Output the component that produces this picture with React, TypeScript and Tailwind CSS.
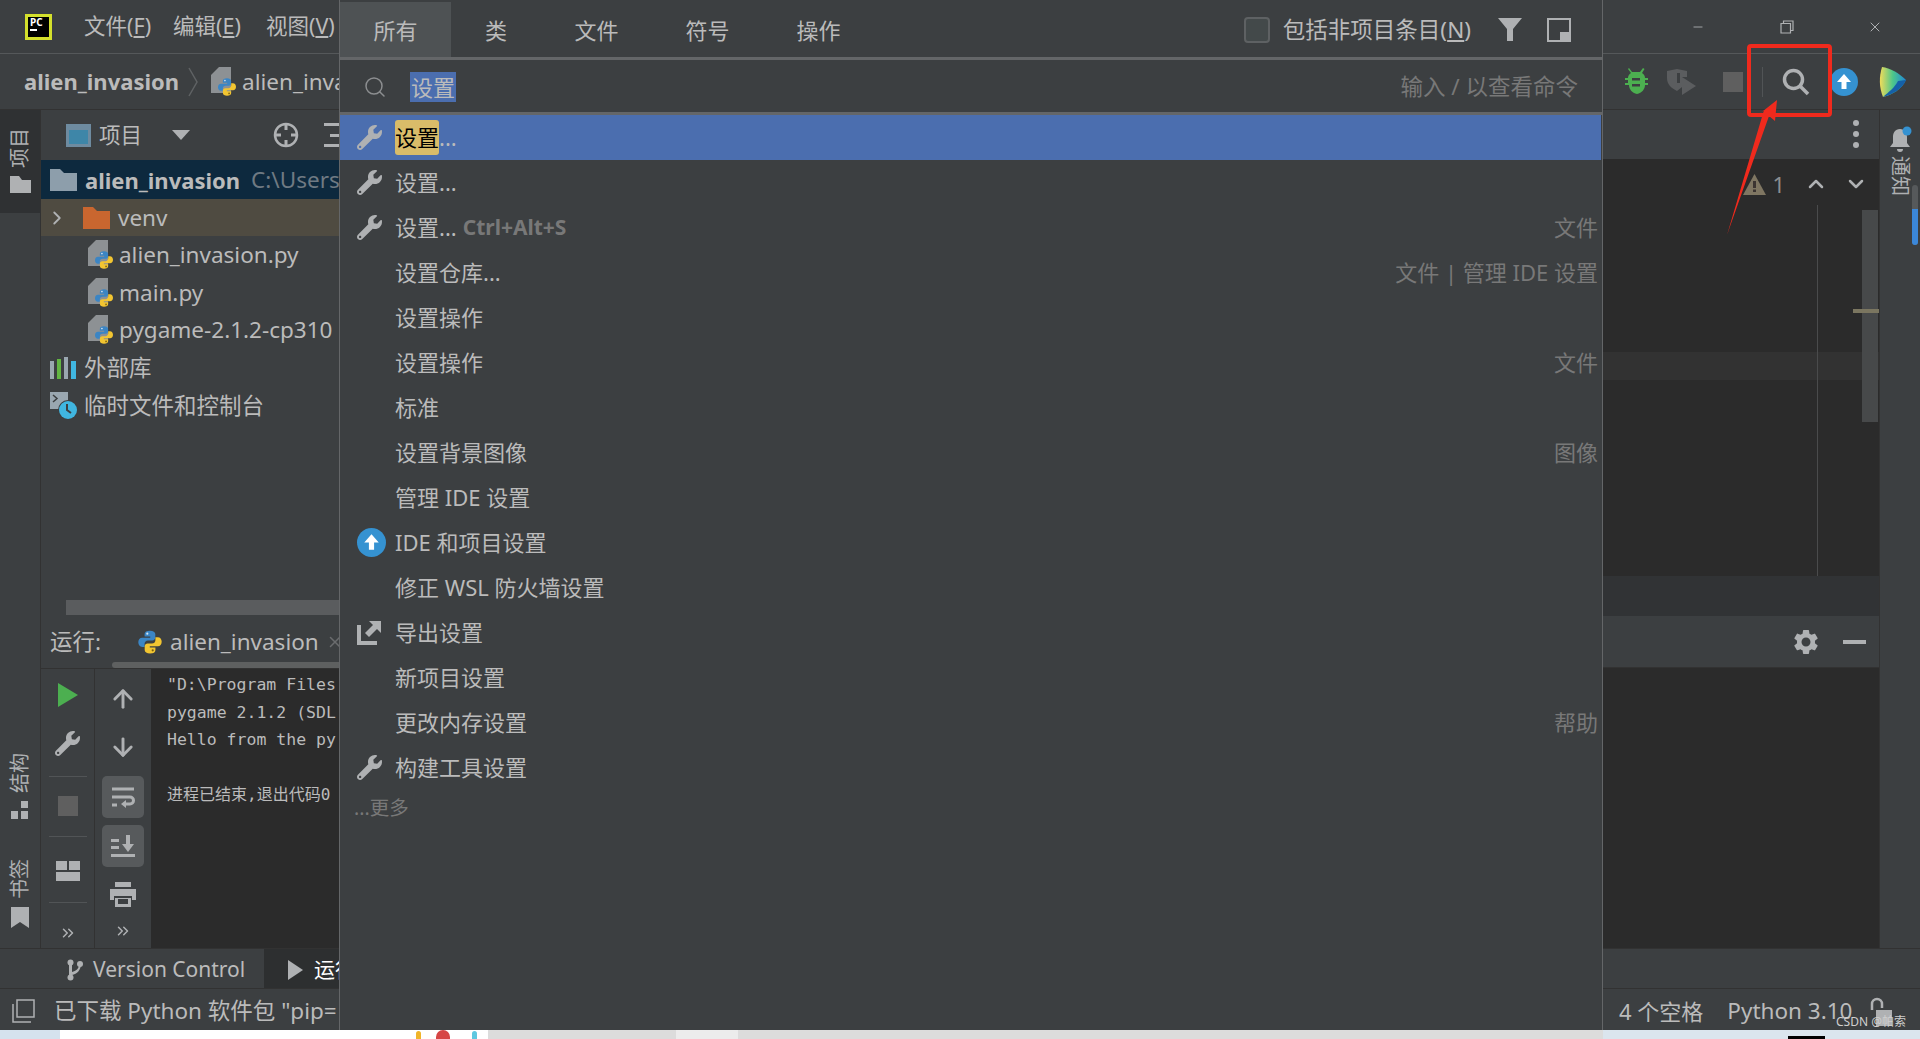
import React from 'react';
import { Search, ChevronRight, ChevronUp, ChevronDown, ChevronsRight, ArrowUp, ArrowDown, X, Minus } from 'lucide-react';
import { FaWrench } from 'react-icons/fa';
import { MdSettings } from 'react-icons/md';

const PyLogo = ({ size = 24 }: { size?: number }) => (
  <svg width={size} height={size} viewBox="0 0 24 24">
    <path fill="#3b85c4" d="M12 1.500c-3.200 0-5 1-5 3.200V7h5.200v1H4.800C2.600 8 1.200 9.700 1.200 12.200s1.400 4.300 3.600 4.300H7v-2.800c0-1.800 1.400-3.100 3.200-3.100h4c1.500 0 2.700-1.200 2.700-2.700V4.700c0-2.100-2-3.200-4.900-3.200z" />
    <path fill="#f2c531" d="M12 22.500c3.200 0 5-1 5-3.200V17h-5.200v-1h7.400c2.200 0 3.600-1.700 3.600-4.200s-1.400-4.300-3.600-4.300H17v2.800c0 1.800-1.400 3.100-3.200 3.100h-4c-1.500 0-2.700 1.200-2.700 2.700v3.200c0 2.100 2 3.200 4.900 3.200z" />
    <circle cx="9.500" cy="4.300" r="1" fill="#d8e6f2" />
    <circle cx="14.500" cy="19.700" r="1" fill="#7a5f10" />
  </svg>
);

const PyFile = () => (
  <span className="relative block w-[26px] h-[30px] shrink-0">
    <svg width="20" height="28" viewBox="0 0 20 28" className="absolute left-0 top-0">
      <path fill="#8d9194" d="M8 0h12v26H0V8z" />
    </svg>
    <span className="absolute left-[6px] top-[10px]">
      <PyLogo size={20} />
    </span>
  </span>
);

const Folder = ({ color }: { color: string }) => (
  <svg width="27" height="22" viewBox="0 0 27 22" className="shrink-0">
    <path fill={color} d="M0 0h10l4 4h13v18H0z" />
  </svg>
);

const UpdateCircle = ({ size = 27 }: { size?: number }) => (
  <svg width={size} height={size} viewBox="0 0 28 28">
    <circle cx="14" cy="14" r="14" fill="#3592d1" />
    <path fill="#fff" d="M14 6l7 8h-4.500v7h-5v-7H7z" />
  </svg>
);

const VTab = ({ children, flip = true }: { children: React.ReactNode; flip?: boolean }) => (
  <span className={`[writing-mode:vertical-rl] [text-orientation:sideways] text-[20px] leading-none text-[#aeb0b2] ${flip ? 'rotate-180' : ''}`}>{children}</span>
);

type Row = {
  label: string;
  icon?: 'wrench' | 'update' | 'export';
  keys?: string;
  right?: string;
};

const rows: Row[] = [
  { label: '设置...', icon: 'wrench' },
  { label: '设置...', icon: 'wrench', keys: 'Ctrl+Alt+S', right: '文件' },
  { label: '设置仓库...', right: '文件 | 管理 IDE 设置' },
  { label: '设置操作' },
  { label: '设置操作', right: '文件' },
  { label: '标准' },
  { label: '设置背景图像', right: '图像' },
  { label: '管理 IDE 设置' },
  { label: 'IDE 和项目设置', icon: 'update' },
  { label: '修正 WSL 防火墙设置' },
  { label: '导出设置', icon: 'export' },
  { label: '新项目设置' },
  { label: '更改内存设置', right: '帮助' },
  { label: '构建工具设置', icon: 'wrench' },
];

const RowIcon = ({ icon }: { icon?: Row['icon'] }) => {
  if (icon === 'wrench') return <FaWrench size={25} color="#afb1b3" />;
  if (icon === 'update') return <UpdateCircle size={29} />;
  if (icon === 'export')
    return (
      <svg width="24" height="24" viewBox="0 0 24 24">
        <path fill="#afb1b3" d="M0 4h4v16h16v4H0z" />
        <path fill="#afb1b3" d="M12 0h12v12l-4-4-8 8-4-4 8-8z" />
      </svg>
    );
  return null;
};

const LeftColumn = () => (
  <div className="w-[339px] shrink-0 flex flex-col overflow-hidden">
    {/* 타이틀바 */}
    <div className="h-[54px] shrink-0 flex items-center border-b border-[#55585a] text-[21.500px] text-[#bbbbbb] whitespace-nowrap">
      <div className="ml-[25px] mr-[32px] w-[27px] h-[26px] bg-black border-[3px] border-[#d4e02c] shrink-0 pl-[2px]">
        <div className="text-[10px] leading-[11px] font-bold text-white">PC</div>
        <div className="w-[7px] h-[2px] mt-[1px] bg-white" />
      </div>
      <span className="mr-[22px]">文件(<span className="underline">F</span>)</span>
      <span className="mr-[25px]">编辑(<span className="underline">E</span>)</span>
      <span>视图(<span className="underline">V</span>)</span>
    </div>
    {/* 브레드크럼 */}
    <div className="h-[56px] shrink-0 flex items-center pl-[24px] border-b border-[#323232] text-[22.500px] text-[#bbbbbb] whitespace-nowrap">
      <span className="font-bold text-[22px]">alien_invasion</span>
      <svg width="10" height="30" viewBox="0 0 10 30" fill="none" stroke="#5f6264" strokeWidth="1.500" className="ml-[9px] mr-[13px] shrink-0">
        <path d="M1 1l8 14-8 14" />
      </svg>
      <PyFile />
      <span className="ml-[5px]">alien_invasion</span>
    </div>
    <div className="flex-1 flex min-h-0">
      {/* 왼쪽 툴 스트립 */}
      <div className="w-[41px] shrink-0 flex flex-col items-center border-r border-[#323232]">
        <div className="w-full h-[103px] bg-[#2f3133] flex flex-col items-center pt-[18px] gap-[8px]">
          <VTab>项目</VTab>
          <svg width="21" height="17" viewBox="0 0 21 17"><path fill="#afb1b3" d="M0 0h9l3 4h9v13H0z" /></svg>
        </div>
        <div className="flex-1" />
        <div className="flex flex-col items-center gap-[8px] mb-[40px]">
          <VTab>结构</VTab>
          <svg width="18" height="18" viewBox="0 0 18 18"><path fill="#afb1b3" d="M10 0h7v7h-7zM0 10h7v8H0zM10 10h7v8h-7z" /></svg>
        </div>
        <div className="flex flex-col items-center gap-[8px] mb-[20px]">
          <VTab>书签</VTab>
          <svg width="18" height="21" viewBox="0 0 18 21"><path fill="#afb1b3" d="M0 0h18v21l-9-6-9 6z" /></svg>
        </div>
      </div>
      <div className="flex-1 min-w-0 flex flex-col">
        {/* 프로젝트 헤더 */}
        <div className="h-[50px] shrink-0 relative flex items-center pl-[25px] text-[21.500px] text-[#bbbbbb] whitespace-nowrap">
          <div className="w-[25px] h-[23px] border-[3px] border-t-[6px] border-[#6e8ba0] bg-[#3e86a8] mr-[8px] shrink-0" />
          <span>项目</span>
          <svg width="18" height="10" viewBox="0 0 18 10" className="ml-[30px] shrink-0"><path fill="#afb1b3" d="M0 0h18L9 10z" /></svg>
          <svg width="26" height="26" viewBox="0 0 26 26" className="ml-[83px] shrink-0">
            <circle cx="13" cy="13" r="11" fill="none" stroke="#afb1b3" strokeWidth="2.500" />
            <path fill="#afb1b3" d="M11.500 1h3v7h-3zM11.500 18h3v7h-3zM1 11.500h7v3H1zM18 11.500h7v3h-7z" />
          </svg>
          <div className="ml-[25px] w-[15px] h-[24px] shrink-0 flex flex-col justify-between">
            <div className="h-[3px] bg-[#afb1b3]" />
            <div className="h-[3px] w-[9px] ml-[6px] bg-[#afb1b3]" />
            <div className="h-[3px] bg-[#afb1b3]" />
          </div>
        </div>
        {/* 트리 */}
        <div className="h-[440px] shrink-0 relative text-[22.500px] text-[#bbbbbb] whitespace-nowrap overflow-hidden">
          <div className="h-[39px] bg-[#0d293e] flex items-center pl-[9px] pt-[1px]">
            <Folder color="#8d9eab" />
            <span className="ml-[8px] font-bold text-[22px]">alien_invasion</span>
            <span className="ml-[11px] text-[#6f7a83]">C:\Users</span>
          </div>
          <div className="h-[37px] bg-[#4f4b41] flex items-center pl-[5px]">
            <ChevronRight size={22} color="#afb1b3" strokeWidth={2} className="mr-[15px] shrink-0" />
            <Folder color="#c9662f" />
            <span className="ml-[8px]">venv</span>
          </div>
          {['alien_invasion.py', 'main.py', 'pygame-2.1.2-cp310'].map((name) => (
            <div key={name} className="h-[37.500px] flex items-center pl-[47px] pt-[1px]">
              <PyFile />
              <span className="ml-[5px]">{name}</span>
            </div>
          ))}
          <div className="h-[37.500px] flex items-center pl-[9px] pt-[1px]">
            <svg width="27" height="22" viewBox="0 0 27 22" className="shrink-0">
              <path fill="#9aa7b0" d="M0 4h4v18H0z" />
              <path fill="#62b543" d="M7 2h4v20H7z" />
              <path fill="#9aa7b0" d="M14 0h4v22h-4z" />
              <path fill="#40b6e0" d="M21 4h5v18h-5z" />
            </svg>
            <span className="ml-[7px]">外部库</span>
          </div>
          <div className="h-[39px] flex items-center pl-[9px] pt-[1px]">
            <svg width="28" height="28" viewBox="0 0 28 28" className="shrink-0">
              <path fill="#9aa7b0" d="M0 0h18v17H0z" />
              <path fill="none" stroke="#3c3f41" strokeWidth="1.500" d="M3 3l4 3.500L3 10" />
              <circle cx="18" cy="18" r="10" fill="#3c3f41" />
              <circle cx="18" cy="18" r="9" fill="#40b6e0" />
              <path fill="none" stroke="#3c3f41" strokeWidth="2" d="M17 12v6l4 3" />
            </svg>
            <span className="ml-[6px]">临时文件和控制台</span>
          </div>
        </div>
        <div className="h-[15px] shrink-0 pl-[25px]">
          <div className="h-full bg-[#5a5c5e]" />
        </div>
        {/* 실행 패널 */}
        <div className="h-[54px] shrink-0 relative flex items-center pl-[9px] border-b border-[#323232] text-[22.500px] text-[#bbbbbb] whitespace-nowrap">
          <span>运行:</span>
          <span className="ml-[36px] mr-[7px]"><PyLogo size={26} /></span>
          <span>alien_invasion</span>
          <X size={18} color="#6a6c6e" className="ml-[7px] shrink-0" />
          <div className="absolute left-[71px] right-0 bottom-0 h-[6px] rounded-l-full bg-[#5e6060]" />
        </div>
        <div className="flex-1 flex min-h-0">
          <div className="w-[54px] shrink-0 flex flex-col items-center border-r border-[#323232]">
            <svg width="20" height="24" viewBox="0 0 20 24" className="mt-[14px]"><path fill="#4caf50" d="M0 0l20 12L0 24z" /></svg>
            <FaWrench size={25} color="#afb1b3" className="mt-[24px]" />
            <div className="w-[38px] h-px bg-[#515456] mt-[20px]" />
            <div className="w-[20px] h-[20px] bg-[#5f5f5f] mt-[19px]" />
            <div className="w-[38px] h-px bg-[#515456] mt-[20px]" />
            <svg width="24" height="20" viewBox="0 0 24 20" className="mt-[24px]"><path fill="#afb1b3" d="M0 0h11v9H0zM13 0h11v9H13zM0 11h24v9H0z" /></svg>
            <div className="w-[38px] h-px bg-[#515456] mt-[21px]" />
            <ChevronsRight size={18} color="#afb1b3" className="mt-[21px]" />
          </div>
          <div className="w-[56px] shrink-0 flex flex-col items-center bg-[#3c3f41]">
            <ArrowUp size={28} strokeWidth={2.500} color="#afb1b3" className="mt-[16px]" />
            <ArrowDown size={28} strokeWidth={2.500} color="#afb1b3" className="mt-[20px]" />
            <div className="w-[42px] h-[42px] rounded-[5px] bg-[#575a5c] mt-[15px] flex items-center justify-center">
              <svg width="24" height="24" viewBox="0 0 24 24" fill="none" stroke="#afb1b3" strokeWidth="3">
                <path d="M1 4h22M1 12h18a3 3 0 010 7h-6M1 20h5" />
                <path fill="#afb1b3" stroke="none" d="M10 19l5-4v8z" />
              </svg>
            </div>
            <div className="w-[42px] h-[42px] rounded-[5px] bg-[#575a5c] mt-[7px] flex items-center justify-center">
              <svg width="24" height="24" viewBox="0 0 24 24">
                <path fill="#afb1b3" d="M0 5h8v3H0zM0 12h8v3H0zM0 20h24v3H0zM15 1h4v9h4l-6 8-6-8h4z" />
              </svg>
            </div>
            <svg width="26" height="25" viewBox="0 0 26 25" className="mt-[15px]">
              <path fill="#afb1b3" d="M5 0h16v5H5zM0 7h26v11h-4v-4H4v4H0zM5 16h16v9H5z" />
              <path fill="#3c3f41" d="M8 17h10v5H8z" />
            </svg>
            <ChevronsRight size={18} color="#afb1b3" className="mt-[15px]" />
          </div>
          <div className="flex-1 min-w-0 bg-[#2b2b2b] pl-[16px] pt-[2px] font-['DejaVu_Sans_Mono','Noto_Sans_CJK_SC',monospace] text-[16.500px] leading-[27.500px] text-[#bbbbbb] whitespace-nowrap overflow-hidden">
            <div>"D:\Program Files</div>
            <div>pygame 2.1.2 (SDL</div>
            <div>Hello from the py</div>
            <div>&nbsp;</div>
            <div className="text-[16px]">进程已结束,退出代码0</div>
          </div>
        </div>
      </div>
    </div>
    {/* 하단 바 */}
    <div className="h-[40px] shrink-0 flex items-stretch border-t border-[#323232] text-[21px] text-[#bbbbbb] whitespace-nowrap">
      <div className="w-[264px] shrink-0 flex items-center pl-[67px] pt-[3px]">
        <svg width="16" height="22" viewBox="0 0 16 22" className="mr-[10px] shrink-0" fill="#afb1b3">
          <circle cx="3.500" cy="3.500" r="3" />
          <circle cx="3.500" cy="18.500" r="3" />
          <circle cx="13" cy="5" r="3" />
          <path d="M2 3h3v16H2zM5 13c4-1 7-3 7-8h2c0 6-4 10-9 11z" />
        </svg>
        <span>Version Control</span>
      </div>
      <div className="flex-1 bg-[#2d2f30] flex items-center pl-[24px] pt-[3px] text-white">
        <svg width="15" height="20" viewBox="0 0 15 20" className="shrink-0"><path fill="#afb1b3" d="M0 0l15 10L0 20z" /></svg>
        <span className="ml-[11px]">运行</span>
      </div>
    </div>
    <div className="h-[42px] shrink-0 flex items-center pt-[3px] border-t border-[#323232] text-[22.500px] text-[#bbbbbb] whitespace-nowrap">
      <svg width="24" height="24" viewBox="0 0 24 24" fill="none" stroke="#afb1b3" strokeWidth="1.500" className="ml-[11px] mr-[19px] shrink-0">
        <path d="M6 1h17v17H6zM2 5v18h18" />
      </svg>
      <span>已下载 Python 软件包 "pip=</span>
    </div>
  </div>
);

const tabs = [
  { name: '类', width: 'w-[90px]' },
  { name: '文件', width: 'w-[111px]' },
  { name: '符号', width: 'w-[111px]' },
  { name: '操作', width: 'w-[111px]' },
];

const Dialog = () => (
  <div className="w-[1264px] shrink-0 flex flex-col border-x border-[#646668] bg-[#3c3f41] text-[22px] text-[#bbbbbb] whitespace-nowrap">
    {/* 탭 */}
    <div className="h-[60px] shrink-0 flex items-stretch pt-[2px] border-b-[3px] border-[#646668]">
      <div className="w-[111px] bg-[#4e5254] flex items-center justify-center pt-[1px]">所有</div>
      {tabs.map((tab) => (
        <div key={tab.name} className={`${tab.width} flex items-center justify-center pt-[1px]`}>{tab.name}</div>
      ))}
      <div className="flex-1" />
      <div className="flex items-center pr-[31px]">
        <div className="w-[26px] h-[26px] rounded-[4px] border-2 border-[#5e6163] bg-[#43494a] mr-[13px]" />
        <span className="mr-[27px] text-[22.500px]">包括非项目条目(<span className="underline">N</span>)</span>
        <svg width="24" height="24" viewBox="0 0 24 24" className="mr-[25px]"><path fill="#afb1b3" d="M0 0h24l-9 11v12H9V11z" /></svg>
        <svg width="24" height="24" viewBox="0 0 24 24"><path fill="#afb1b3" d="M0 0h24v24H0zM2 2v20h11v-8h9V2z" /></svg>
      </div>
    </div>
    {/* 검색 */}
    <div className="h-[55px] shrink-0 flex items-center border-b-[3px] border-[#646668] pl-[23px] pr-[24px] pt-[1px]">
      <Search size={24} color="#8c8e90" strokeWidth={1.500} />
      <span className="ml-[23px] bg-[#4b6eaf] leading-[30px] px-[1px]">设置</span>
      <div className="flex-1" />
      <span className="text-[#787878] text-[22.500px]">输入 / 以查看命令</span>
    </div>
    {/* 결과 목록 */}
    <div className="h-[45px] shrink-0 mr-[1px] bg-[#4b6eaf] flex items-center pl-[17px]">
      <span className="w-[38px] shrink-0 flex"><RowIcon icon="wrench" /></span>
      <span className="bg-[#d9bc69] text-black rounded-[3px] leading-[35px]">设置</span>
      <span>...</span>
    </div>
    {rows.map((row, i) => (
      <div key={i} className="h-[45px] shrink-0 flex items-center pl-[15px] pr-[4px]">
        <span className="w-[40px] shrink-0 flex pl-[2px]"><RowIcon icon={row.icon} /></span>
        <span>{row.label}</span>
        {row.keys ? <span className="ml-[6px] text-[21px] font-bold text-[#787878]">{row.keys}</span> : null}
        <div className="flex-1" />
        {row.right ? <span className="text-[#787878]">{row.right}</span> : null}
      </div>
    ))}
    <div className="h-[36px] shrink-0 flex items-center pl-[14px] text-[19.500px] text-[#787878]">...更多</div>
    <div className="flex-1" />
  </div>
);

const RightColumn = () => (
  <div className="flex-1 min-w-0 flex flex-col">
    {/* 창 버튼 */}
    <div className="h-[54px] shrink-0 relative border-b border-[#55585a] flex items-center">
      <Minus size={14} strokeWidth={1.500} color="#afb1b3" className="ml-[88px]" />
      <svg width="14" height="14" viewBox="0 0 14 14" fill="none" stroke="#afb1b3" strokeWidth="1.200" className="ml-[75px]">
        <path d="M1 3.500h9.500V13H1zM3.500 3.500V1H13v9.500h-2.500" />
      </svg>
      <X size={16} strokeWidth={1.500} color="#afb1b3" className="ml-[73px]" />
    </div>
    {/* 툴바 */}
    <div className="h-[56px] shrink-0 flex items-center border-b border-[#323232]">
      <svg width="24" height="28" viewBox="0 0 24 28" className="ml-[21px]">
        <path fill="#4caf50" d="M5 0l3 4h8l3-4 1.500 1-2.500 4c2 1 3 3 3 5h3v2h-3v3h3v2h-3c0 4-3 8-8 9-5-1-8-5-8-9H1v-2h3v-3H1v-2h3c0-2 1-4 3-5L4 1z" />
        <path fill="#3c3f41" d="M8 10h8v2.500H8zM8 16h8v2.500H8z" />
      </svg>
      <svg width="30" height="26" viewBox="0 0 30 26" className="ml-[19px]">
        <path fill="#5b5d5f" d="M0 2l10-2 10 2v6h-5v10l-5 4C4 19 0 15 0 9z" />
        <path fill="#5b5d5f" d="M15 8l14 9-14 9z" />
        <path fill="#3c3f41" d="M10 4h3v10h-3z" />
      </svg>
      <div className="w-[20px] h-[20px] bg-[#5f5f5f] ml-[26px]" />
      <div className="w-px h-[30px] bg-[#515456] ml-[19px]" />
      <svg width="28" height="28" viewBox="0 0 28 28" fill="none" stroke="#afb1b3" strokeWidth="3.500" className="ml-[19px]">
        <circle cx="11.500" cy="11.500" r="9" />
        <path d="M18 18l8 8" />
      </svg>
      <span className="ml-[20px] flex"><UpdateCircle size={28} /></span>
      <svg width="27" height="30" viewBox="0 0 27 30" className="ml-[21px]">
        <defs>
          <linearGradient id="lg" x1="0" y1="0" x2="1" y2="0">
            <stop offset="0" stopColor="#f0dc5a" />
            <stop offset="0.500" stopColor="#4cc78a" />
            <stop offset="1" stopColor="#1e88d8" />
          </linearGradient>
        </defs>
        <path fill="url(#lg)" d="M3 0c8 1 17 6 24 13-4 9-14 15-23 17C0 20 0 10 3 0z" />
        <path fill="#1560a8" d="M27 13c-4 9-14 15-23 17 6-5 12-10 15-16z" />
      </svg>
    </div>
    <div className="flex-1 flex min-h-0">
      <div className="w-[277px] shrink-0 flex flex-col border-r border-[#323232]">
        <div className="h-[49px] shrink-0 flex flex-col items-end justify-center gap-[5px] pr-[20px] pb-[2px]">
          <div className="w-[6px] h-[6px] rounded-full bg-[#afb1b3]" />
          <div className="w-[6px] h-[6px] rounded-full bg-[#afb1b3]" />
          <div className="w-[6px] h-[6px] rounded-full bg-[#afb1b3]" />
        </div>
        {/* 에디터 */}
        <div className="h-[417px] shrink-0 relative bg-[#2b2b2b]">
          <div className="absolute left-0 right-0 top-[193px] h-[28px] bg-[#323232]" />
          <div className="absolute left-[214px] top-[46px] bottom-0 w-px bg-[#4a4b4c]" />
          <div className="absolute left-[259px] top-[51px] w-[16px] h-[212px] bg-[#47494a]" />
          <div className="absolute left-[250px] top-[150px] w-[26px] h-[4px] bg-[#7b7660]" />
          <div className="absolute right-[11px] top-[13px] flex items-center text-[22px] text-[#8c8e90]">
            <svg width="23" height="21" viewBox="0 0 23 21"><path fill="#7f7662" d="M11.500 0L23 21H0z" /><path fill="#3c3532" d="M10 7h3v7h-3zM10 15.500h3V18h-3z" /></svg>
            <span className="ml-[6px] leading-none">1</span>
            <ChevronUp size={24} strokeWidth={2.500} color="#afb1b3" className="ml-[19px]" />
            <ChevronDown size={24} strokeWidth={2.500} color="#afb1b3" className="ml-[16px]" />
          </div>
        </div>
        <div className="h-[40px] shrink-0 bg-[#313335]" />
        <div className="h-[52px] shrink-0 flex items-center justify-end pr-[13px] border-b border-[#323232]">
          <MdSettings size={30} color="#afb1b3" />
          <div className="w-[23px] h-[4px] bg-[#afb1b3] ml-[22px]" />
        </div>
        <div className="flex-1 bg-[#2b2b2b]" />
      </div>
      <div className="flex-1 relative flex flex-col items-center pt-[16px]">
        <svg width="24" height="28" viewBox="0 0 24 28" className="mb-[2px]">
          <path fill="#afb1b3" d="M12 3c5 0 7 4 7 8v6l3 4H2l3-4v-6c0-4 2-8 7-8zM9 23h6a3 3 0 01-6 0z" />
          <circle cx="19" cy="5" r="4.500" fill="#3592d1" />
        </svg>
        <VTab flip={false}>通知</VTab>
        <div className="absolute left-[32px] top-[75px] w-[6px] h-[60px] rounded-full bg-[#56595b] overflow-hidden flex flex-col justify-end">
          <div className="h-[36px] bg-[#3b87d9]" />
        </div>
      </div>
    </div>
    <div className="h-[40px] shrink-0 border-t border-[#323232]" />
    {/* 상태바 */}
    <div className="h-[42px] shrink-0 relative flex items-center pl-[16px] pt-[3px] border-t border-[#323232] text-[22px] text-[#bbbbbb] whitespace-nowrap">
      <span>4 个空格</span>
      <span className="ml-[24px] text-[22.500px]">Python 3.10</span>
      <svg width="22" height="30" viewBox="0 0 22 30" className="ml-[18px] shrink-0">
        <path fill="none" stroke="#afb1b3" strokeWidth="2.500" d="M2 14V8a5 5 0 0110 0v4" />
        <path fill="#afb1b3" d="M6 14h16v16H6z" />
      </svg>
    </div>
  </div>
);

export default function App() {
  return (
    <div className="relative w-[1920px] h-[1039px] overflow-hidden bg-[#3c3f41] font-['Noto_Sans','Noto_Sans_CJK_SC',sans-serif] flex flex-col">
      <div className="h-[1030px] shrink-0 flex">
        <LeftColumn />
        <Dialog />
        <RightColumn />
      </div>
      {/* 작업표시줄 아래 잘린 창 */}
      <div className="flex-1 flex">
        <div className="w-[60px] bg-[#d5e2ee]" />
        <div className="w-[428px] bg-white relative">
          <div className="absolute left-[356px] top-[1px] w-[5px] h-[8px] rounded-t-full bg-[#f0b429]" />
          <div className="absolute left-[376px] top-0 w-[14px] h-[9px] rounded-t-full bg-[#d64545]" />
          <div className="absolute left-[412px] top-[1px] w-[5px] h-[8px] rounded-t-full bg-[#5ec8e0]" />
        </div>
        <div className="w-[188px] bg-[#dcdcdc]" />
        <div className="w-[62px] bg-[#ececec]" />
        <div className="flex-1 bg-[#dcdcdc]" />
        <div className="w-[317px] bg-[#dbe5ee] relative">
          <div className="absolute left-[185px] top-[6px] w-[37px] h-[3px] bg-black" />
        </div>
      </div>
      {/* 빨간 주석 */}
      <div className="absolute left-[1747px] top-[44px] w-[85px] h-[73px] rounded-[4px] border-[4px] border-[#f02a1d]" />
      <svg width="80" height="150" viewBox="0 0 80 150" className="absolute left-[1720px] top-[95px]">
        <path fill="#f02a1d" d="M7 140L44 15 38 20 57 5 55 26 49 21z" />
      </svg>
      <span className="absolute left-[1836px] top-[1016px] text-[12px] leading-none text-[#cfcfcf]">CSDN @帕索</span>
    </div>
  );
}
